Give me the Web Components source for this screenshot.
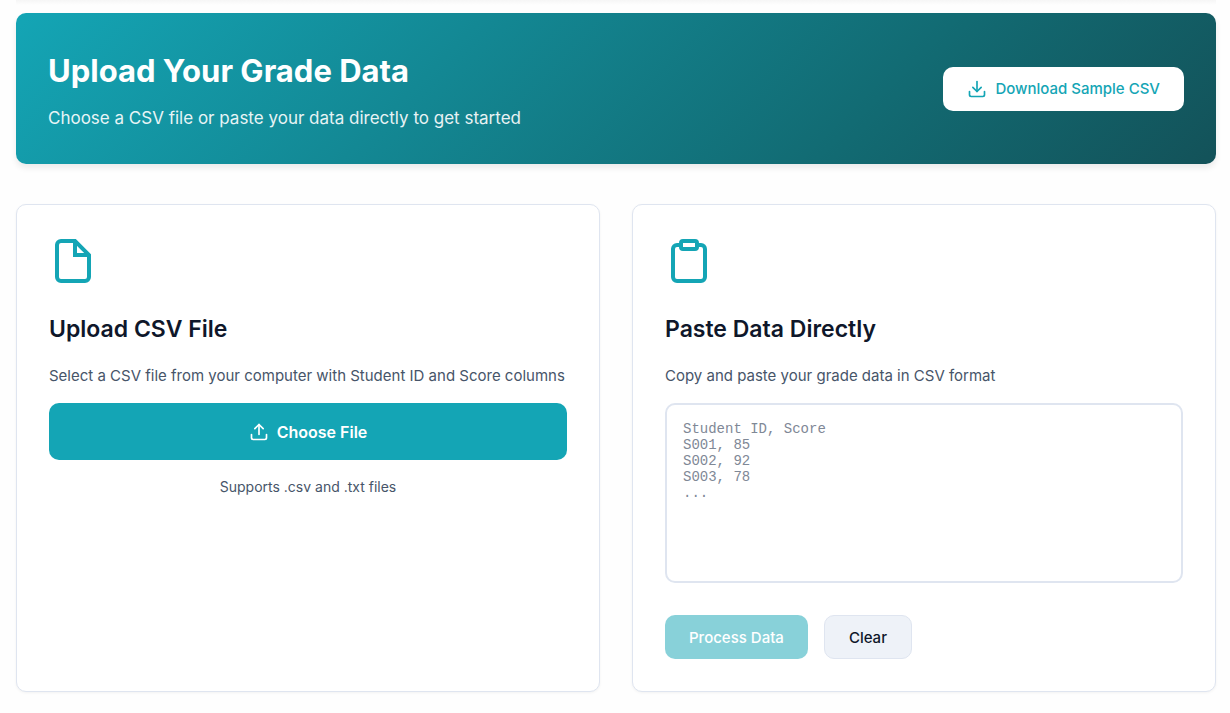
<!DOCTYPE html>
<html lang="en">
<head>
<meta charset="UTF-8">
<meta name="viewport" content="width=device-width, initial-scale=1.0">
<title>Upload Your Grade Data</title>
<style>
  :root {
    --primary: #14a5b5;
    --primary-dark: #135259;
    --text: #0f172a;
    --text-muted: #475569;
    --border: #dfe5f0;
    --surface: #fefefe;
    --radius: 10px;
  }
  body {
    margin: 0;
    background: var(--surface);
    color: var(--text);
    font-family: Inter, "Liberation Sans", sans-serif;
    font-size: 16px;
  }
</style>
</head>
<body>
<grade-upload-page></grade-upload-page>

<script>
// Stroke icons on a 24x24 grid
const ICONS = {
  download: '<g stroke-linecap="round" stroke-linejoin="round"><path d="M21 15v4a2 2 0 0 1-2 2H5a2 2 0 0 1-2-2v-4"/><path d="M7 10l5 5 5-5"/><path d="M12 15V3"/></g>',
  upload: '<g stroke-linecap="round" stroke-linejoin="round"><path d="M21 15v4a2 2 0 0 1-2 2H5a2 2 0 0 1-2-2v-4"/><path d="M17 8l-5-5-5 5"/><path d="M12 3v12"/></g>',
  file: '<path d="M13 2H6a2 2 0 0 0-2 2v16a2 2 0 0 0 2 2h12a2 2 0 0 0 2-2V9z"/><path d="M13 2v7h7"/>',
  clipboard: '<path d="M16 4h2a2 2 0 0 1 2 2v14a2 2 0 0 1-2 2H6a2 2 0 0 1-2-2V6a2 2 0 0 1 2-2h2"/><rect x="8" y="2" width="8" height="4" rx="1" ry="1"/>'
};

class AppIcon extends HTMLElement {
  constructor() {
    super();
    this.attachShadow({ mode: 'open' });
  }

  connectedCallback() {
    const name = this.getAttribute('name');
    this.shadowRoot.innerHTML = `
      <style>
        :host { display: block; flex: none; width: 20px; height: 20px; }
        :host([size="large"]) { width: 48px; height: 48px; color: var(--primary); }
        svg { display: block; width: 100%; height: 100%; }
      </style>
      <svg viewBox="0 0 24 24" fill="none" stroke="currentColor" stroke-width="2" aria-hidden="true">${ICONS[name] || ''}</svg>
    `;
  }
}

class AppButton extends HTMLElement {
  constructor() {
    super();
    this.attachShadow({ mode: 'open' });
  }

  connectedCallback() {
    const icon = this.getAttribute('icon');
    this.shadowRoot.innerHTML = `
      <style>
        :host { display: block; }
        button { display: flex; align-items: center; justify-content: center; gap: 8px; width: 100%; height: 44px; padding: 0 24px; border: 0; border-radius: var(--radius); background: var(--primary); color: #fff; font: inherit; font-size: 15px; font-weight: 500; white-space: nowrap; cursor: pointer; }
        button:disabled { opacity: 0.5; cursor: not-allowed; }
        :host([variant="light"]) button { background: #fff; color: var(--primary); }
        :host([variant="secondary"]) button { background: #eef2f8; color: var(--text); border: 1px solid var(--border); }
        :host([variant="block"]) button { height: 57px; font-size: 16px; font-weight: 600; }
      </style>
      <button type="button" ${this.hasAttribute('disabled') ? 'disabled' : ''}>
        ${icon ? `<app-icon name="${icon}"></app-icon>` : ''}
        <slot></slot>
      </button>
    `;
  }

  set disabled(value) {
    this.shadowRoot.querySelector('button').disabled = value;
  }
}

class PageBanner extends HTMLElement {
  constructor() {
    super();
    this.attachShadow({ mode: 'open' });
    this.shadowRoot.innerHTML = `
      <style>
        :host { display: flex; align-items: center; justify-content: space-between; gap: 32px; padding: 32px; border-radius: var(--radius); background: linear-gradient(135deg, var(--primary) 0%, #126b73 70%, var(--primary-dark) 100%); box-shadow: 0 4px 6px rgba(0, 0, 0, 0.08); color: #fff; }
        .copy { display: flex; flex-direction: column; gap: 8px; }
        ::slotted(h1) { margin: 0; font-size: 31px; font-weight: 700; line-height: 52px; }
        ::slotted(p) { margin: 0; font-size: 17px; line-height: 27px; opacity: 0.9; }
      </style>
      <div class="copy">
        <slot name="title"></slot>
        <slot name="subtitle"></slot>
      </div>
      <slot name="action"></slot>
    `;
  }
}

class OptionCard extends HTMLElement {
  constructor() {
    super();
    this.attachShadow({ mode: 'open' });
  }

  connectedCallback() {
    this.shadowRoot.innerHTML = `
      <style>
        :host { display: block; padding: 32px; border: 1px solid var(--border); border-radius: var(--radius); background: #fff; box-shadow: 0 1px 3px rgba(0, 0, 0, 0.05); }
        h2 { margin: 24px 0 16px; font-size: 23px; font-weight: 600; line-height: 40px; }
        p { margin: 0 0 16px; font-size: 15px; line-height: 22px; color: var(--text-muted); }
      </style>
      <app-icon name="${this.getAttribute('icon')}" size="large"></app-icon>
      <h2>${this.getAttribute('heading')}</h2>
      <p>${this.getAttribute('description')}</p>
      <slot></slot>
    `;
  }
}

class FilePicker extends HTMLElement {
  constructor() {
    super();
    this.attachShadow({ mode: 'open' });
    this.shadowRoot.innerHTML = `
      <style>
        :host { display: block; }
        p { margin: 16px 0 0; font-size: 14px; line-height: 22px; text-align: center; color: var(--text-muted); }
      </style>
      <input type="file" accept=".csv,.txt" aria-label="Grade file" hidden>
      <app-button variant="block" icon="upload">Choose File</app-button>
      <p>Supports .csv and .txt files</p>
    `;
  }

  connectedCallback() {
    const input = this.shadowRoot.querySelector('input');
    this.shadowRoot.querySelector('app-button').addEventListener('click', () => input.click());
  }
}

class PasteForm extends HTMLElement {
  constructor() {
    super();
    this.attachShadow({ mode: 'open' });
    this.shadowRoot.innerHTML = `
      <style>
        :host { display: block; }
        textarea { display: block; box-sizing: border-box; width: 100%; height: 180px; padding: 16px; border: 2px solid var(--border); border-radius: var(--radius); background: #fff; color: var(--text); font: 14px/16px "Liberation Mono", monospace; resize: none; }
        textarea::placeholder { color: #7f8896; }
        .actions { display: flex; gap: 16px; margin-top: 32px; }
      </style>
      <textarea aria-label="Grade data" placeholder="Student ID, Score&#10;S001, 85&#10;S002, 92&#10;S003, 78&#10;..."></textarea>
      <div class="actions">
        <app-button id="process" disabled>Process Data</app-button>
        <app-button id="clear" variant="secondary">Clear</app-button>
      </div>
    `;
  }

  connectedCallback() {
    const textarea = this.shadowRoot.querySelector('textarea');
    const process = this.shadowRoot.getElementById('process');

    textarea.addEventListener('input', () => {
      process.disabled = !textarea.value.trim();
    });
    this.shadowRoot.getElementById('clear').addEventListener('click', () => {
      textarea.value = '';
      process.disabled = true;
    });
  }
}

class GradeUploadPage extends HTMLElement {
  constructor() {
    super();
    this.attachShadow({ mode: 'open' });
    this.shadowRoot.innerHTML = `
      <style>
        :host { display: block; padding: 0 14px 16px 16px; }
        /* soft shadow under the top edge */
        .edge { height: 5px; margin-bottom: 8px; background: linear-gradient(#f6f6f6, var(--surface)); }
        .options { display: grid; grid-template-columns: 1fr 1fr; gap: 32px; margin-top: 40px; }
        @media (max-width: 768px) {
          .options { grid-template-columns: 1fr; }
        }
      </style>
      <div class="edge"></div>
      <main>
        <page-banner>
          <h1 slot="title">Upload Your Grade Data</h1>
          <p slot="subtitle">Choose a CSV file or paste your data directly to get started</p>
          <app-button slot="action" variant="light" icon="download">Download Sample CSV</app-button>
        </page-banner>
        <div class="options">
          <option-card icon="file" heading="Upload CSV File" description="Select a CSV file from your computer with Student ID and Score columns">
            <file-picker></file-picker>
          </option-card>
          <option-card icon="clipboard" heading="Paste Data Directly" description="Copy and paste your grade data in CSV format">
            <paste-form></paste-form>
          </option-card>
        </div>
      </main>
    `;
  }
}

customElements.define('app-icon', AppIcon);
customElements.define('app-button', AppButton);
customElements.define('page-banner', PageBanner);
customElements.define('option-card', OptionCard);
customElements.define('file-picker', FilePicker);
customElements.define('paste-form', PasteForm);
customElements.define('grade-upload-page', GradeUploadPage);
</script>
</body>
</html>
